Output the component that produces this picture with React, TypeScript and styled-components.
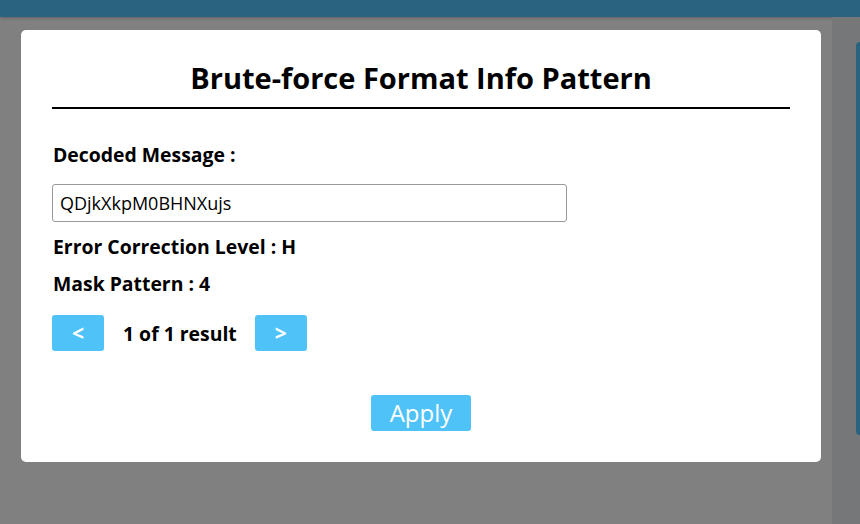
import React, { useState } from "react";
import styled, { createGlobalStyle } from "styled-components";

const GlobalStyle = createGlobalStyle`
    html, body {
        margin: 0;
        padding: 0;
        height: 100%;
    }

    body {
        font-family: "Open Sans", "Noto Sans", sans-serif;
        background-color: #808080;
        overflow: hidden;
    }

    #root {
        height: 100%;
    }
`;

const Page = styled.div`
    position: relative;
    display: flex;
    flex-direction: column;
    width: 860px;
    height: 524px;
    background-color: #808080;
`;

const Header = styled.div`
    height: 17px;
    flex-shrink: 0;
    background-color: #29637f;
    box-shadow: 0 1px 3px rgba(0, 0, 0, 0.25);
`;

const Body = styled.div`
    flex: 1;
    display: flex;
    justify-content: flex-end;
`;

const SideStrip = styled.div`
    width: 28px;
    padding: 25px 0 0 24px;
    box-sizing: border-box;
    background-color: #767779;
`;

const SidePanel = styled.div`
    height: 393px;
    background-color: #29637f;
    border-radius: 5px 0 0 5px;
`;

const Overlay = styled.div`
    position: absolute;
    inset: 0;
    padding: 30px 0 0 21px;
`;

const Modal = styled.div`
    display: flex;
    flex-direction: column;
    align-items: flex-start;
    width: 800px;
    padding: 28px 31px 31px;
    box-sizing: border-box;
    background-color: #ffffff;
    border-radius: 5px;
    color: #000000;
`;

const Title = styled.h2`
    align-self: stretch;
    margin: 0;
    font-size: 29px;
    line-height: 40px;
    font-weight: 700;
    text-align: center;
`;

const Rule = styled.hr`
    align-self: stretch;
    margin: 9px 0 0;
    border: none;
    height: 2px;
    background-color: #000000;
`;

const Label = styled.div<{ $gap: number }>`
    margin-top: ${p => p.$gap}px;
    padding-left: 1px;
    font-size: 19.4px;
    line-height: 24px;
    font-weight: 700;
`;

const TextInput = styled.input`
    margin-top: 17px;
    width: 515px;
    height: 38px;
    padding: 0 7px;
    box-sizing: border-box;
    border: 1px solid #999999;
    border-radius: 3px;
    font-family: "Open Sans", "Noto Sans", sans-serif;
    font-size: 18px;
    color: #000000;
    outline: none;
`;

const Pager = styled.div`
    display: flex;
    align-items: center;
    margin-top: 19px;
`;

const PagerButton = styled.button`
    width: 52px;
    height: 36px;
    padding: 0;
    border: none;
    border-radius: 3px;
    background-color: #4fc3f7;
    color: #ffffff;
    font-family: "Open Sans", "Noto Sans", sans-serif;
    font-size: 21px;
    font-weight: 700;
    cursor: pointer;
`;

const PagerText = styled.span`
    margin: 0 18px 0 19px;
    font-size: 19.4px;
    font-weight: 700;
`;

const ApplyButton = styled.button`
    align-self: center;
    margin-top: 44px;
    width: 100px;
    height: 36px;
    padding: 0;
    border: none;
    border-radius: 3px;
    background-color: #4fc3f7;
    color: #ffffff;
    font-family: "Open Sans", "Noto Sans", sans-serif;
    font-size: 24px;
    line-height: 36px;
    cursor: pointer;
`;

export default function App() {
    const [message, setMessage] = useState<string>("QDjkXkpM0BHNXujs");

    return (
        <>
            <GlobalStyle />
            <Page>
                <Header />
                <Body>
                    <SideStrip>
                        <SidePanel />
                    </SideStrip>
                </Body>
                <Overlay>
                    <Modal>
                        <Title>Brute-force Format Info Pattern</Title>
                        <Rule />
                        <Label $gap={34}>Decoded Message :</Label>
                        <TextInput value={message} onChange={e => setMessage(e.target.value)} />
                        <Label $gap={13}>Error Correction Level : H</Label>
                        <Label $gap={13}>Mask Pattern : 4</Label>
                        <Pager>
                            <PagerButton type="button">&lt;</PagerButton>
                            <PagerText>1 of 1 result</PagerText>
                            <PagerButton type="button">&gt;</PagerButton>
                        </Pager>
                        <ApplyButton type="button">Apply</ApplyButton>
                    </Modal>
                </Overlay>
            </Page>
        </>
    );
}
